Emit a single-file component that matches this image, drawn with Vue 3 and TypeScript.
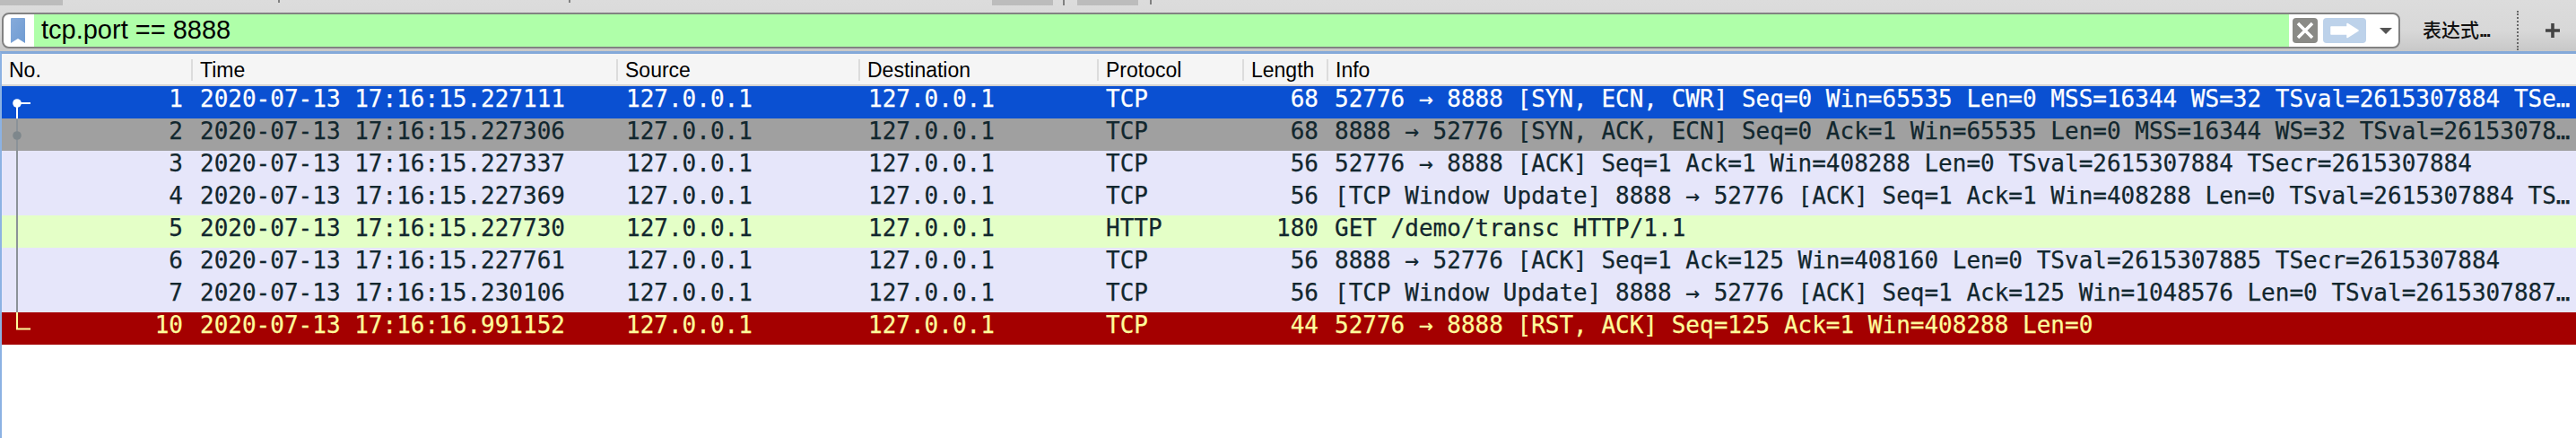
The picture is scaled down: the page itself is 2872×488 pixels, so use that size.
<script setup lang="ts">
interface Packet {
  no: number
  time: string
  proto: string
  len: number
  info: string
  tone: string
}

const columns: string[] = ['No.', 'Time', 'Source', 'Destination', 'Protocol', 'Length', 'Info']

const packets: Packet[] = [
  { no: 1, time: '2020-07-13 17:16:15.227111', proto: 'TCP', len: 68, tone: 'selected', info: '52776 → 8888 [SYN, ECN, CWR] Seq=0 Win=65535 Len=0 MSS=16344 WS=32 TSval=2615307884 TSe…' },
  { no: 2, time: '2020-07-13 17:16:15.227306', proto: 'TCP', len: 68, tone: 'grey', info: '8888 → 52776 [SYN, ACK, ECN] Seq=0 Ack=1 Win=65535 Len=0 MSS=16344 WS=32 TSval=26153078…' },
  { no: 3, time: '2020-07-13 17:16:15.227337', proto: 'TCP', len: 56, tone: 'tcp', info: '52776 → 8888 [ACK] Seq=1 Ack=1 Win=408288 Len=0 TSval=2615307884 TSecr=2615307884' },
  { no: 4, time: '2020-07-13 17:16:15.227369', proto: 'TCP', len: 56, tone: 'tcp', info: '[TCP Window Update] 8888 → 52776 [ACK] Seq=1 Ack=1 Win=408288 Len=0 TSval=2615307884 TS…' },
  { no: 5, time: '2020-07-13 17:16:15.227730', proto: 'HTTP', len: 180, tone: 'http', info: 'GET /demo/transc HTTP/1.1' },
  { no: 6, time: '2020-07-13 17:16:15.227761', proto: 'TCP', len: 56, tone: 'tcp', info: '8888 → 52776 [ACK] Seq=1 Ack=125 Win=408160 Len=0 TSval=2615307885 TSecr=2615307884' },
  { no: 7, time: '2020-07-13 17:16:15.230106', proto: 'TCP', len: 56, tone: 'tcp', info: '[TCP Window Update] 8888 → 52776 [ACK] Seq=1 Ack=125 Win=1048576 Len=0 TSval=2615307887…' },
  { no: 10, time: '2020-07-13 17:16:16.991152', proto: 'TCP', len: 44, tone: 'reset', info: '52776 → 8888 [RST, ACK] Seq=125 Ack=1 Win=408288 Len=0' },
]
</script>

<template>
  <div class="app">
    <div class="toolbar">
      <div class="strip">
        <span class="tab first"></span>
        <span class="tick t1"></span>
        <span class="tick t2"></span>
        <span class="tab t3"></span>
        <span class="tick t4"></span>
        <span class="tab t5"></span>
        <span class="tick t6"></span>
      </div>
      <div class="filter-row">
        <div class="filter">
          <div class="bookmark">
            <svg width="16" height="28" viewBox="0 0 16 28">
              <defs>
                <linearGradient id="bm" x1="0" y1="0" x2="1" y2="1">
                  <stop offset="0" stop-color="#86abdb" />
                  <stop offset="1" stop-color="#6f9bd2" />
                </linearGradient>
              </defs>
              <path d="M1 0H15a1 1 0 0 1 1 1V28L8 23 0 28V1a1 1 0 0 1 1-1Z" fill="url(#bm)" />
            </svg>
          </div>
          <div class="expr">tcp.port == 8888</div>
          <div class="controls">
            <div class="clear">
              <svg width="28" height="28" viewBox="0 0 28 28">
                <path d="M6 6 22 22M22 6 6 22" stroke="#fff" stroke-width="3.5" />
              </svg>
            </div>
            <div class="apply">
              <svg width="48" height="28" viewBox="0 0 48 28">
                <path d="M9 10H27V6.5L39 14 27 21.5V18H9Z" fill="#fff" stroke="#fff" stroke-width="1.5" stroke-linejoin="round" />
              </svg>
            </div>
            <svg class="caret" width="14" height="7" viewBox="0 0 14 7"><path d="M0 0H14L7 7Z" fill="#555" /></svg>
          </div>
        </div>
        <div class="expr-btn">表达式<span class="more">...</span></div>
        <div class="dots"></div>
        <div class="plus">
          <svg width="16" height="16" viewBox="0 0 16 16"><path d="M6.2 0H9.8V6.2H16V9.8H9.8V16H6.2V9.8H0V6.2H6.2Z" fill="#444" /></svg>
        </div>
      </div>
    </div>

    <div class="body">
      <div class="grid head">
        <div v-for="col in columns" :key="col" class="hcell"><span>{{ col }}</span></div>
      </div>
      <div class="list">
        <div v-for="p in packets" :key="p.no" class="grid row" :class="p.tone">
          <div class="cell num">{{ p.no }}</div>
          <div class="cell">{{ p.time }}</div>
          <div class="cell addr">127.0.0.1</div>
          <div class="cell addr">127.0.0.1</div>
          <div class="cell">{{ p.proto }}</div>
          <div class="cell num">{{ p.len }}</div>
          <div class="cell info">{{ p.info }}</div>
        </div>
        <svg class="thread" width="40" height="288" viewBox="0 0 40 288">
          <path d="M16 37H18V252H16Z" fill="#8b9298" />
          <path d="M16 19H18V36H16Z" fill="#fff" />
          <path d="M17 18H32V20H17Z" fill="#fff" />
          <circle cx="17" cy="19" r="4.8" fill="#fff" />
          <circle cx="17" cy="55" r="4.8" fill="#7e878c" />
          <path d="M16 252H18V269.5H32V271.5H16Z" fill="#fffc9c" />
        </svg>
      </div>
    </div>
  </div>
</template>

<style scoped>
.app {
  width: 2872px;
  height: 488px;
  display: flex;
  flex-direction: column;
  background: #fff;
  overflow: hidden;
}
.toolbar {
  height: 57px;
  flex: none;
  background: linear-gradient(#dcdcdc, #d8d8d8 60%, #c8c8c8);
}
.strip {
  height: 6px;
  display: flex;
  align-items: flex-start;
}
.tab {
  width: 68px;
  height: 6px;
  background: #bcbcbc;
  flex: none;
}
.tab.first { width: 70px; }
.tick {
  width: 2px;
  height: 3px;
  background: #808080;
  flex: none;
}
.t1 { margin-left: 240px; }
.t2 { margin-left: 322px; }
.t3 { margin-left: 470px; }
.t4 { margin-left: 11px; height: 6px; }
.t5 { margin-left: 14px; }
.t6 { margin-left: 13px; height: 5px; }
.filter-row {
  height: 40px;
  margin-top: 8px;
  padding-left: 2px;
  display: flex;
  align-items: center;
}
.filter {
  width: 2674px;
  height: 40px;
  box-sizing: border-box;
  border: 2px solid #828282;
  border-radius: 8px;
  background: #fff;
  display: flex;
  overflow: hidden;
  flex: none;
}
.bookmark {
  width: 34px;
  flex: none;
  box-sizing: border-box;
  padding: 4px 0 0 8px;
}
.bookmark svg {
  display: block;
}
.expr {
  flex: 1;
  background: #afffa9;
  padding-left: 8px;
  font: 29px/34px "Liberation Sans", Arial, sans-serif;
  color: #000;
}
.controls {
  width: 122px;
  flex: none;
  box-sizing: border-box;
  padding-left: 4px;
  display: flex;
  align-items: center;
}
.clear {
  width: 28px;
  height: 28px;
  border-radius: 4px;
  background: #8a8a86;
  flex: none;
}
.apply {
  width: 48px;
  height: 28px;
  margin-left: 6px;
  border-radius: 4px;
  background: #bdd2ea;
  flex: none;
}
.clear svg, .apply svg { display: block; }
.caret {
  margin-left: 15px;
  flex: none;
}
.expr-btn {
  margin-left: 25px;
  width: 105px;
  flex: none;
  font: 500 21px/38px "Liberation Sans", "Noto Sans CJK SC", sans-serif;
  color: #111;
  white-space: nowrap;
}
.more {
  font-weight: 700;
  letter-spacing: -2px;
}
.dots {
  height: 44px;
  width: 0;
  flex: none;
  border-left: 2px dotted #666;
}
.plus {
  margin-left: 30px;
  flex: none;
  display: flex;
}
.body {
  flex: 1;
  border-top: 3px solid #84a9d9;
  border-left: 2px solid #8cb2e3;
  display: flex;
  flex-direction: column;
  min-height: 0;
}
.grid {
  display: grid;
  grid-template-columns: 211px 474px 270px 266px 162px 94px 1fr;
}
.head {
  height: 36px;
  box-sizing: border-box;
  background: #f5f5f5;
  border-bottom: 2px solid #d2d2d2;
  flex: none;
}
.hcell {
  font: 23px/24px "Liberation Sans", Arial, sans-serif;
  color: #000;
  margin-top: 6px;
  height: 24px;
  box-sizing: border-box;
}
.hcell span {
  padding-left: 8px;
}
.hcell:not(:first-child) {
  border-left: 2px solid #dcdcdc;
}
.list {
  position: relative;
}
.row {
  height: 36px;
  font: 26px/29px "DejaVu Sans Mono", monospace;
  white-space: pre;
  color: #12272e;
  -webkit-text-stroke: 0.25px currentColor;
}
.cell {
  padding-left: 10px;
  overflow: hidden;
}
.cell.addr {
  padding-left: 11px;
}
.cell.num {
  padding: 0 9px 0 0;
  text-align: right;
}
.cell.info {
  padding-left: 9px;
}
.selected { background: #0a50d2; color: #fff; }
.grey { background: #a0a0a0; }
.tcp { background: #e6e6fa; }
.http { background: #e4ffc7; }
.reset { background: #a40000; color: #fffc9c; }
.thread {
  position: absolute;
  left: 0;
  top: 0;
  pointer-events: none;
}
</style>
